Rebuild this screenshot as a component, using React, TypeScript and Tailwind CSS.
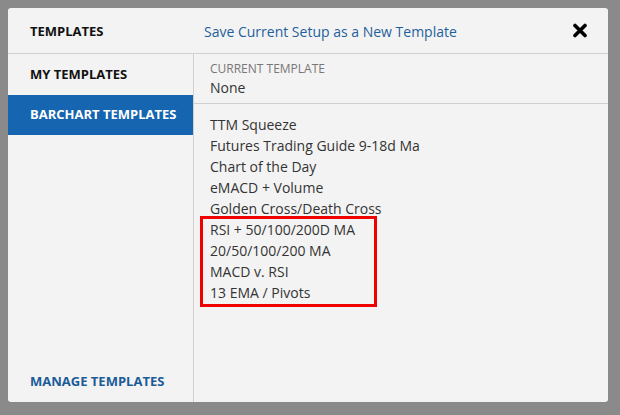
import React from "react";

const items = [
  "TTM Squeeze",
  "Futures Trading Guide 9-18d Ma",
  "Chart of the Day",
  "eMACD + Volume",
  "Golden Cross/Death Cross",
];
const boxed = ["RSI + 50/100/200D MA", "20/50/100/200 MA", "MACD v. RSI", "13 EMA / Pivots"];

export default function App() {
  return (
    <div
      className="w-[620px] h-[415px] bg-[#8a8a8a] p-2 overflow-hidden"
      style={{ fontFamily: '"Open Sans", "Noto Sans", sans-serif' }}
    >
      <div className="w-[600px] h-[394px] bg-[#f3f3f3] rounded-[3px] flex flex-col overflow-hidden">
        <div className="h-[46px] flex items-center border-b border-[#d0d0d0] shrink-0">
          <div className="w-[186px] pl-[22px] pt-[3px] text-[13px] font-bold text-[#111]">TEMPLATES</div>
          <div className="pl-[10px] pt-[1px] text-[14px] text-[#1f5f9c] flex-1">Save Current Setup as a New Template</div>
          <div className="pr-[21px]">
            <svg width="14" height="15" viewBox="0 0 14 15">
              <path d="M2 2.5 L12 12.5 M12 2.5 L2 12.5" stroke="#000" strokeWidth="3.6" strokeLinecap="round" />
            </svg>
          </div>
        </div>
        <div className="flex flex-1 min-h-0">
          <div className="w-[186px] border-r border-[#d0d0d0] flex flex-col shrink-0">
            <div className="h-[41px] flex items-center pl-[22px] text-[13px] font-bold text-[#111]">MY TEMPLATES</div>
            <div className="h-[40px] flex items-center pl-[22px] text-[13px] font-bold text-white bg-[#1565b0]">
              BARCHART TEMPLATES
            </div>
            <div className="mt-auto h-[40px] flex items-center pl-[22px] text-[13px] font-bold text-[#1b5c98]">
              MANAGE TEMPLATES
            </div>
          </div>
          <div className="flex-1 flex flex-col">
            <div className="h-[50px] border-b border-[#d0d0d0] pl-4 pt-[6px] shrink-0">
              <div className="text-[12px] leading-[18px] text-[#777]">CURRENT TEMPLATE</div>
              <div className="text-[14px] leading-[20px] text-[#333]">None</div>
            </div>
            <div className="pl-4 pt-[10px] text-[14px] leading-[21px] text-[#333]">
              {items.map((t) => (
                <div key={t}>{t}</div>
              ))}
              <div className="relative">
                {boxed.map((t) => (
                  <div key={t}>{t}</div>
                ))}
                <div className="absolute left-[-10px] top-[-3px] w-[177px] h-[91px] border-[3px] border-[#f00000]" />
              </div>
            </div>
          </div>
        </div>
      </div>
    </div>
  );
}
